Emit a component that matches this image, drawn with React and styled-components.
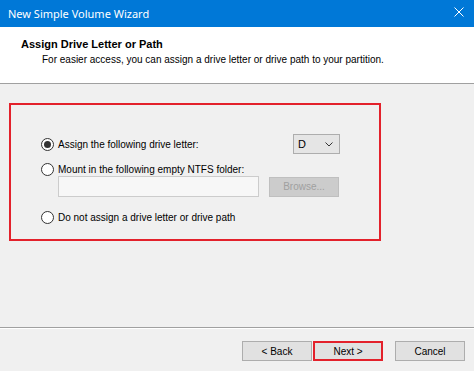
import React from "react";
import styled, { createGlobalStyle } from "styled-components";

const GlobalStyle = createGlobalStyle`
  html, body {
    margin: 0;
    padding: 0;
    background: #f0f0f0;
  }
  * {
    box-sizing: border-box;
  }
`;

function Wizard() {
  return (
    <Window>
      <TitleBar>
        <span>New Simple Volume Wizard</span>
        <CloseIcon viewBox="0 0 10 10">
          <path d="M0.5 0.5 L9.5 9.5 M9.5 0.5 L0.5 9.5" />
        </CloseIcon>
      </TitleBar>
      <Header>
        <Heading>Assign Drive Letter or Path</Heading>
        <SubHeading>
          For easier access, you can assign a drive letter or drive path to your partition.
        </SubHeading>
      </Header>
      <Body>
        <OptionsBox>
          <FirstRow>
            <Option>
              <Radio checked />
              Assign the following drive letter:
            </Option>
            <Select>
              <span>D</span>
              <svg width="8" height="5" viewBox="0 0 8 5">
                <path d="M0.5 0.5 L4 4 L7.5 0.5" fill="none" stroke="#333" strokeWidth="1" />
              </svg>
            </Select>
          </FirstRow>
          <Option $top={8}>
            <Radio />
            Mount in the following empty NTFS folder:
          </Option>
          <FolderRow>
            <PathInput />
            <BrowseButton>Browse...</BrowseButton>
          </FolderRow>
          <Option $top={13}>
            <Radio />
            Do not assign a drive letter or drive path
          </Option>
        </OptionsBox>
      </Body>
      <Footer>
        <Button>&lt; Back</Button>
        <Button $highlight>Next &gt;</Button>
        <Button $gap>Cancel</Button>
      </Footer>
    </Window>
  );
}

const Window = styled.div`
  width: 474px;
  height: 371px;
  display: flex;
  flex-direction: column;
  background: #f0f0f0;
  font-family: "Liberation Sans", Arial, sans-serif;
  color: #000;
  overflow: hidden;
`;

const TitleBar = styled.div`
  height: 27px;
  background: #0078d7;
  color: #fff;
  display: flex;
  align-items: center;
  justify-content: space-between;
  padding: 0 10px 1px 8px;
  font-family: "Noto Sans", sans-serif;
  font-size: 11px;
`;

const CloseIcon = styled.svg`
  width: 10px;
  height: 10px;
  margin-bottom: 3px;
  path {
    stroke: #fff;
    stroke-width: 1;
    fill: none;
  }
`;

const Header = styled.div`
  height: 57px;
  background: #fff;
  border-bottom: 1px solid #a0a0a0;
  padding: 11px 0 0 21px;
`;

const Heading = styled.div`
  font-size: 11px;
  font-weight: 700;
  line-height: 13px;
`;

const SubHeading = styled.div`
  font-size: 10px;
  line-height: 12px;
  margin: 3px 0 0 21px;
`;

const Body = styled.div`
  flex: 1;
  padding: 19px 0 0 9px;
  border-bottom: 1px solid #a0a0a0;
  box-shadow: 0 1px 0 #fff;
`;

const OptionsBox = styled.div`
  width: 372px;
  height: 138px;
  border: 2px solid #e3212b;
  padding: 29px 39px 0 30px;
  display: flex;
  flex-direction: column;
`;

const FirstRow = styled.div`
  display: flex;
  align-items: center;
  justify-content: space-between;
  height: 20px;
`;

const Option = styled.label`
  display: flex;
  align-items: center;
  gap: 4px;
  height: 14px;
  font-size: 10px;
  margin-top: ${(p) => p.$top || 0}px;
`;

const Radio = styled.span`
  width: 13px;
  height: 13px;
  border-radius: 50%;
  border: 1px solid #333;
  background: #fff;
  display: flex;
  align-items: center;
  justify-content: center;
  &::after {
    content: "";
    width: 7px;
    height: 7px;
    border-radius: 50%;
    background: ${(p) => (p.checked ? "#333" : "transparent")};
  }
`;

const Select = styled.div`
  width: 47px;
  height: 20px;
  background: #e5e5e5;
  border: 1px solid #adadad;
  display: flex;
  align-items: center;
  justify-content: space-between;
  padding: 0 6px 0 4px;
  font-size: 11px;
`;

const FolderRow = styled.div`
  display: flex;
  align-items: center;
  gap: 10px;
  margin: 0 0 0 17px;
`;

const PathInput = styled.div`
  width: 201px;
  height: 21px;
  background: #f7f7f7;
  border: 1px solid #cccccc;
`;

const BrowseButton = styled.div`
  width: 70px;
  height: 20px;
  background: #cccccc;
  border: 1px solid #bfbfbf;
  color: #a0a0a0;
  font-size: 10px;
  display: flex;
  align-items: center;
  justify-content: center;
`;

const Footer = styled.div`
  height: 43px;
  display: flex;
  justify-content: flex-end;
  align-items: flex-start;
  padding: 13px 9px 0 0;
  gap: 1px;
`;

const Button = styled.div`
  width: 70px;
  height: 20px;
  background: #e1e1e1;
  border: ${(p) => (p.$highlight ? "2px solid #e3212b" : "1px solid #adadad")};
  margin-left: ${(p) => (p.$gap ? "11px" : "0")};
  font-size: 10px;
  display: flex;
  align-items: center;
  justify-content: center;
`;

export default function App() {
  return (
    <>
      <GlobalStyle />
      <Wizard />
    </>
  );
}
